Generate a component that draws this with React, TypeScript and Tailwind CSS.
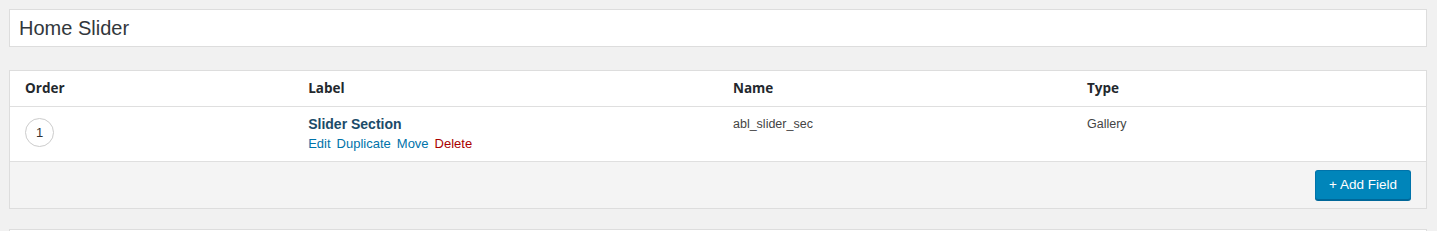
export default function App() {
  const sans = { fontFamily: '"Liberation Sans", Arial, sans-serif' }
  const heading = { fontFamily: '"Open Sans", "Liberation Sans", sans-serif' }

  return (
    <div className="min-h-[231px] bg-[#f1f1f1] pt-[9px] px-[9px] pr-[10px]" style={sans}>
      {/* Title input */}
      <div className="h-[38px] bg-white border border-[#dddddd] flex items-center px-[9px]">
        <span className="text-[20px] text-[#32373c] leading-none">Home Slider</span>
      </div>

      {/* Fields table */}
      <div className="mt-[23px] bg-white border border-[#dddddd]">
        <div className="grid grid-cols-[20%_30%_25%_25%] h-[36px] items-center border-b border-[#dfdfdf]" style={heading}>
          <div className="pl-[15px] text-[13.5px] font-bold text-[#23282d]">Order</div>
          <div className="pl-[15px] text-[13.5px] font-bold text-[#23282d]">Label</div>
          <div className="pl-[15px] text-[13.5px] font-bold text-[#23282d]">Name</div>
          <div className="pl-[15px] text-[13.5px] font-bold text-[#23282d]">Type</div>
        </div>

        <div className="grid grid-cols-[20%_30%_25%_25%] h-[55px] border-b border-[#dfdfdf]">
          <div className="pl-[15px] pt-[11px]">
            <div className="w-[29px] h-[29px] rounded-full border border-[#cccccc] flex items-center justify-center text-[13px] text-[#333333]">
              1
            </div>
          </div>
          <div className="pl-[15px] pt-[9px]">
            <div className="text-[14px] font-bold text-[#1b4b69] leading-[17px]">Slider Section</div>
            <div className="flex gap-[6px] text-[13px] leading-[15px] mt-[3px]">
              <span className="text-[#0073aa]">Edit</span>
              <span className="text-[#0073aa]">Duplicate</span>
              <span className="text-[#0073aa]">Move</span>
              <span className="text-[#aa0000]">Delete</span>
            </div>
          </div>
          <div className="pl-[15px] pt-[10px] text-[12.5px] text-[#444444] leading-[15px]">abl_slider_sec</div>
          <div className="pl-[15px] pt-[10px] text-[12.5px] text-[#444444] leading-[15px]">Gallery</div>
        </div>

        <div className="h-[46px] bg-[#f4f4f4] flex items-center justify-end pr-[15px]">
          <button className="h-[30px] px-[13px] rounded-[3px] bg-[#0085ba] border border-[#0073aa] border-b-[#006799] text-white text-[13.5px] leading-none shadow-[0_1px_0_#006799]">
            + Add Field
          </button>
        </div>
      </div>

      {/* Next box */}
      <div className="mt-[20px] h-[10px] bg-white border border-[#dddddd] border-b-0"></div>
    </div>
  )
}
